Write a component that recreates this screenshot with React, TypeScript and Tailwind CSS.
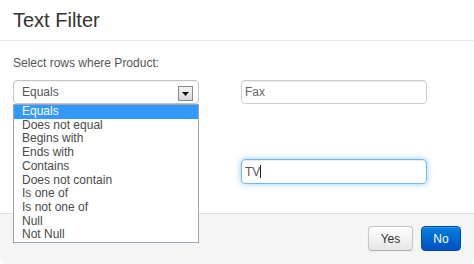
import React from "react";

const items = [
  "Equals",
  "Does not equal",
  "Begins with",
  "Ends with",
  "Contains",
  "Does not contain",
  "Is one of",
  "Is not one of",
  "Null",
  "Not Null",
];

function SelectBox({ value }: { value?: string }) {
  return (
    <div className="relative h-[24px] w-[186px] rounded-[4px] border border-[#c4c4c4] bg-white shadow-[inset_0_1px_1px_rgba(0,0,0,0.06)] flex items-center pl-[8px] text-[12px] text-[#555]">
      {value ? <span>{value}</span> : null}
      <div className="absolute right-[5px] top-[5px] w-[15px] h-[15px] border border-[#8a8a8a] bg-linear-to-b from-[#f4f4f4] to-[#d9d9d9] flex items-center justify-center">
        <svg width="7" height="4" viewBox="0 0 7 4">
          <path d="M0 0 H7 L3.5 4 Z" fill="#111" />
        </svg>
      </div>
    </div>
  );
}

export default function App() {
  return (
    <div className="relative w-[474px] h-[264px] overflow-hidden bg-white font-['Liberation_Sans',Arial,sans-serif]">
      <div className="h-[41px] pl-[13px] pt-[9px] border-b border-[#e8e8e8]">
        <div className="text-[20px] leading-[23px] text-[#333]">Text Filter</div>
      </div>
      <div className="h-[172px] px-[13px] pt-[15px]">
        <div className="text-[12px] leading-[14px] text-[#555]">Select rows where Product:</div>
        <div className="mt-[10px] grid grid-cols-[186px_186px] gap-x-[42px]">
          <SelectBox value="Equals" />
          <div className="h-[24px] rounded-[4px] border border-[#cccccc] shadow-[inset_0_1px_1px_rgba(0,0,0,0.075)] flex items-center pl-[3px] text-[12px] text-[#666]">
            Fax
          </div>
        </div>
        <div className="mt-[55px] grid grid-cols-[186px_186px] gap-x-[42px]">
          <SelectBox />
          <div className="h-[25px] rounded-[4px] border border-[rgba(82,168,236,0.8)] shadow-[inset_0_1px_1px_rgba(0,0,0,0.075),0_0_6px_rgba(82,168,236,0.6)] flex items-center pl-[3px] text-[12px] text-[#555]">
            <span>TV</span>
            <span className="inline-block w-px h-[13px] bg-[#222]" />
          </div>
        </div>
      </div>
      <div className="h-[51px] border-t border-[#dddddd] bg-[#f5f5f5] rounded-b-[6px] flex justify-end items-start gap-[8px] pt-[12px] pr-[13px]">
        <button className="h-[25px] w-[45px] rounded-[4px] border border-[#c8c8c8] border-b-[#b3b3b3] bg-linear-to-b from-white to-[#e6e6e6] text-[12px] text-[#333] shadow-[inset_0_1px_0_rgba(255,255,255,0.2),0_1px_2px_rgba(0,0,0,0.05)]">
          Yes
        </button>
        <button className="h-[25px] w-[40px] rounded-[4px] border border-[#0047b8] bg-linear-to-b from-[#0a80de] to-[#004fc2] text-[12px] text-white shadow-[inset_0_1px_0_rgba(255,255,255,0.2)]">
          No
        </button>
      </div>
      <div className="absolute left-[13px] top-[104px] w-[186px] border border-[#9ba6b6] bg-white text-[12px] leading-[13.7px] text-[#4a4a4a]">
        {items.map((it, i) => (
          <div
            key={it}
            className={
              i === 0
                ? "pl-[8px] bg-[#3399ff] text-white"
                : "pl-[8px]"
            }
          >
            {it}
          </div>
        ))}
      </div>
    </div>
  );
}
